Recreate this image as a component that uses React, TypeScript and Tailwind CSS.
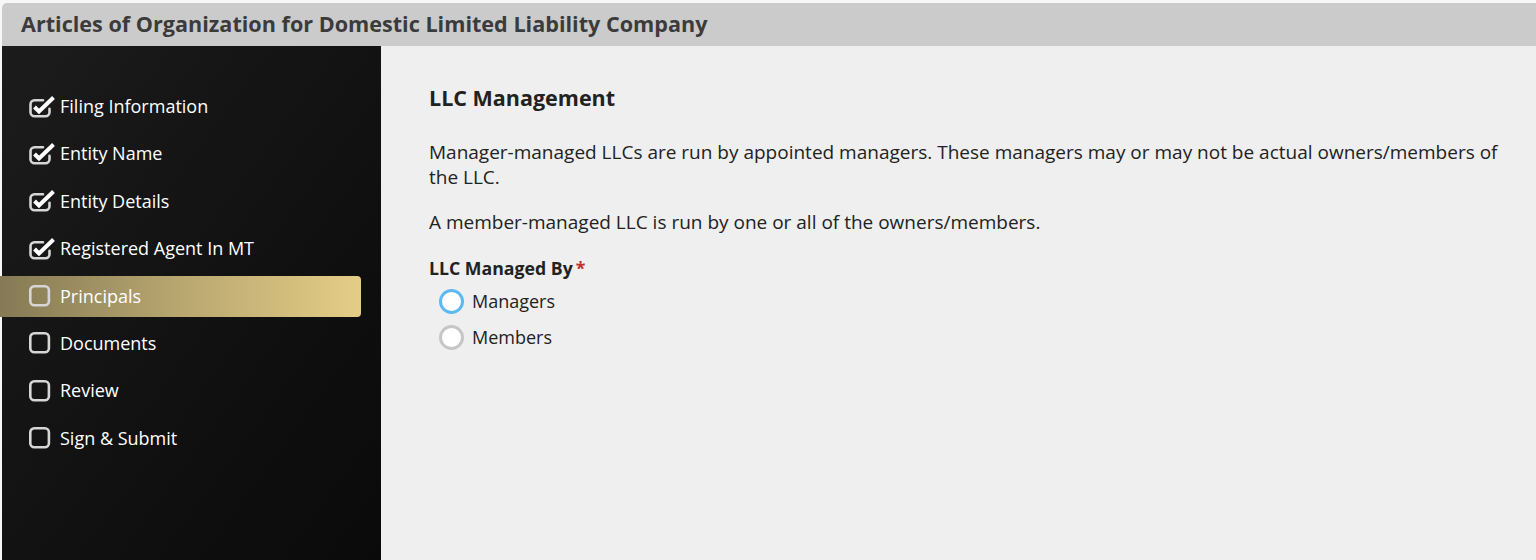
const steps = [
  { label: "Filing Information", done: true },
  { label: "Entity Name", done: true },
  { label: "Entity Details", done: true },
  { label: "Registered Agent In MT", done: true },
  { label: "Principals", done: false, active: true },
  { label: "Documents", done: false },
  { label: "Review", done: false },
  { label: "Sign & Submit", done: false },
]

function CheckedBox() {
  return (
    <svg width="24" height="24" viewBox="0 0 24 24" fill="none" className="shrink-0 overflow-visible">
      <path
        d="M14 5.2H5.5a4 4 0 0 0-4 4v8a4 4 0 0 0 4 4h11a4 4 0 0 0 4-4v-3.5"
        stroke="#d6d6d6"
        strokeWidth="2.6"
        strokeLinecap="round"
      />
      <path d="M5.5 12l4.5 4.5L24.5 2.5" stroke="#ffffff" strokeWidth="4" />
    </svg>
  )
}

function EmptyBox() {
  return (
    <svg width="24" height="24" viewBox="0 0 24 24" fill="none" className="shrink-0">
      <rect x="1.3" y="2.3" width="18.6" height="19" rx="4" stroke="#d6d6d6" strokeWidth="2.6" />
    </svg>
  )
}

function Radio({ label, focused }: { label: string; focused?: boolean }) {
  return (
    <label className="flex h-[36px] items-center gap-[8px] pl-[10px]">
      <span
        className={
          "h-[25px] w-[25px] rounded-full border-[3px] bg-white " +
          (focused ? "border-[#5cb9f2]" : "border-[#c6c6c6]")
        }
      />
      <span className="text-[18px] text-[#222]">{label}</span>
    </label>
  )
}

export default function App() {
  return (
    <div
      className="min-h-[560px] w-full overflow-hidden bg-[#f7f7f7] pl-[2px] pt-[3px]"
      style={{ fontFamily: '"Open Sans", "Noto Sans", sans-serif' }}
    >
      <div className="flex h-[557px] flex-col">
        <div className="flex h-[43px] shrink-0 items-center rounded-tl-[5px] bg-[#cbcbcb] pl-[19px]">
          <h1 className="text-[21.6px] font-bold text-[#3b3b3b]">
            Articles of Organization for Domestic Limited Liability Company
          </h1>
        </div>

        <div className="flex flex-1">
          <nav className="flex w-[379px] shrink-0 flex-col gap-[6.4px] bg-gradient-to-br from-[#1c1c1c] via-[#121212] to-[#0a0a0a] pr-[20px] pt-[40px]">
            {steps.map(s => (
              <div
                key={s.label}
                className={
                  "flex h-[41px] items-center gap-[7px] text-[18px] text-white " +
                  (s.active
                    ? "-ml-[2px] rounded-r-[4px] bg-gradient-to-r from-[#857a55] via-[#b9a770] to-[#e4cd86] pl-[29px]"
                    : "pl-[27px]")
                }
              >
                {s.done ? <CheckedBox /> : <EmptyBox />}
                <span>{s.label}</span>
              </div>
            ))}
          </nav>

          <main className="flex-1 bg-[#efefef] pl-[48px] pr-[30px] pt-[38px] text-[#222]">
            <h2 className="text-[21.5px] font-bold leading-[28px]">LLC Management</h2>
            <p className="mt-[28px] text-[19px] leading-[25px]">
              Manager-managed LLCs are run by appointed managers. These managers may or may not be actual
              owners/members of the LLC.
            </p>
            <p className="mt-[20px] text-[19px] leading-[25px]">
              A member-managed LLC is run by one or all of the owners/members.
            </p>
            <div className="mt-[21px] text-[17.7px] font-bold leading-[24px]">
              LLC Managed By<span className="ml-[3px] text-[#c0302b]">*</span>
            </div>
            <div className="mt-[3px] flex flex-col">
              <Radio label="Managers" focused />
              <Radio label="Members" />
            </div>
          </main>
        </div>
      </div>
    </div>
  )
}
